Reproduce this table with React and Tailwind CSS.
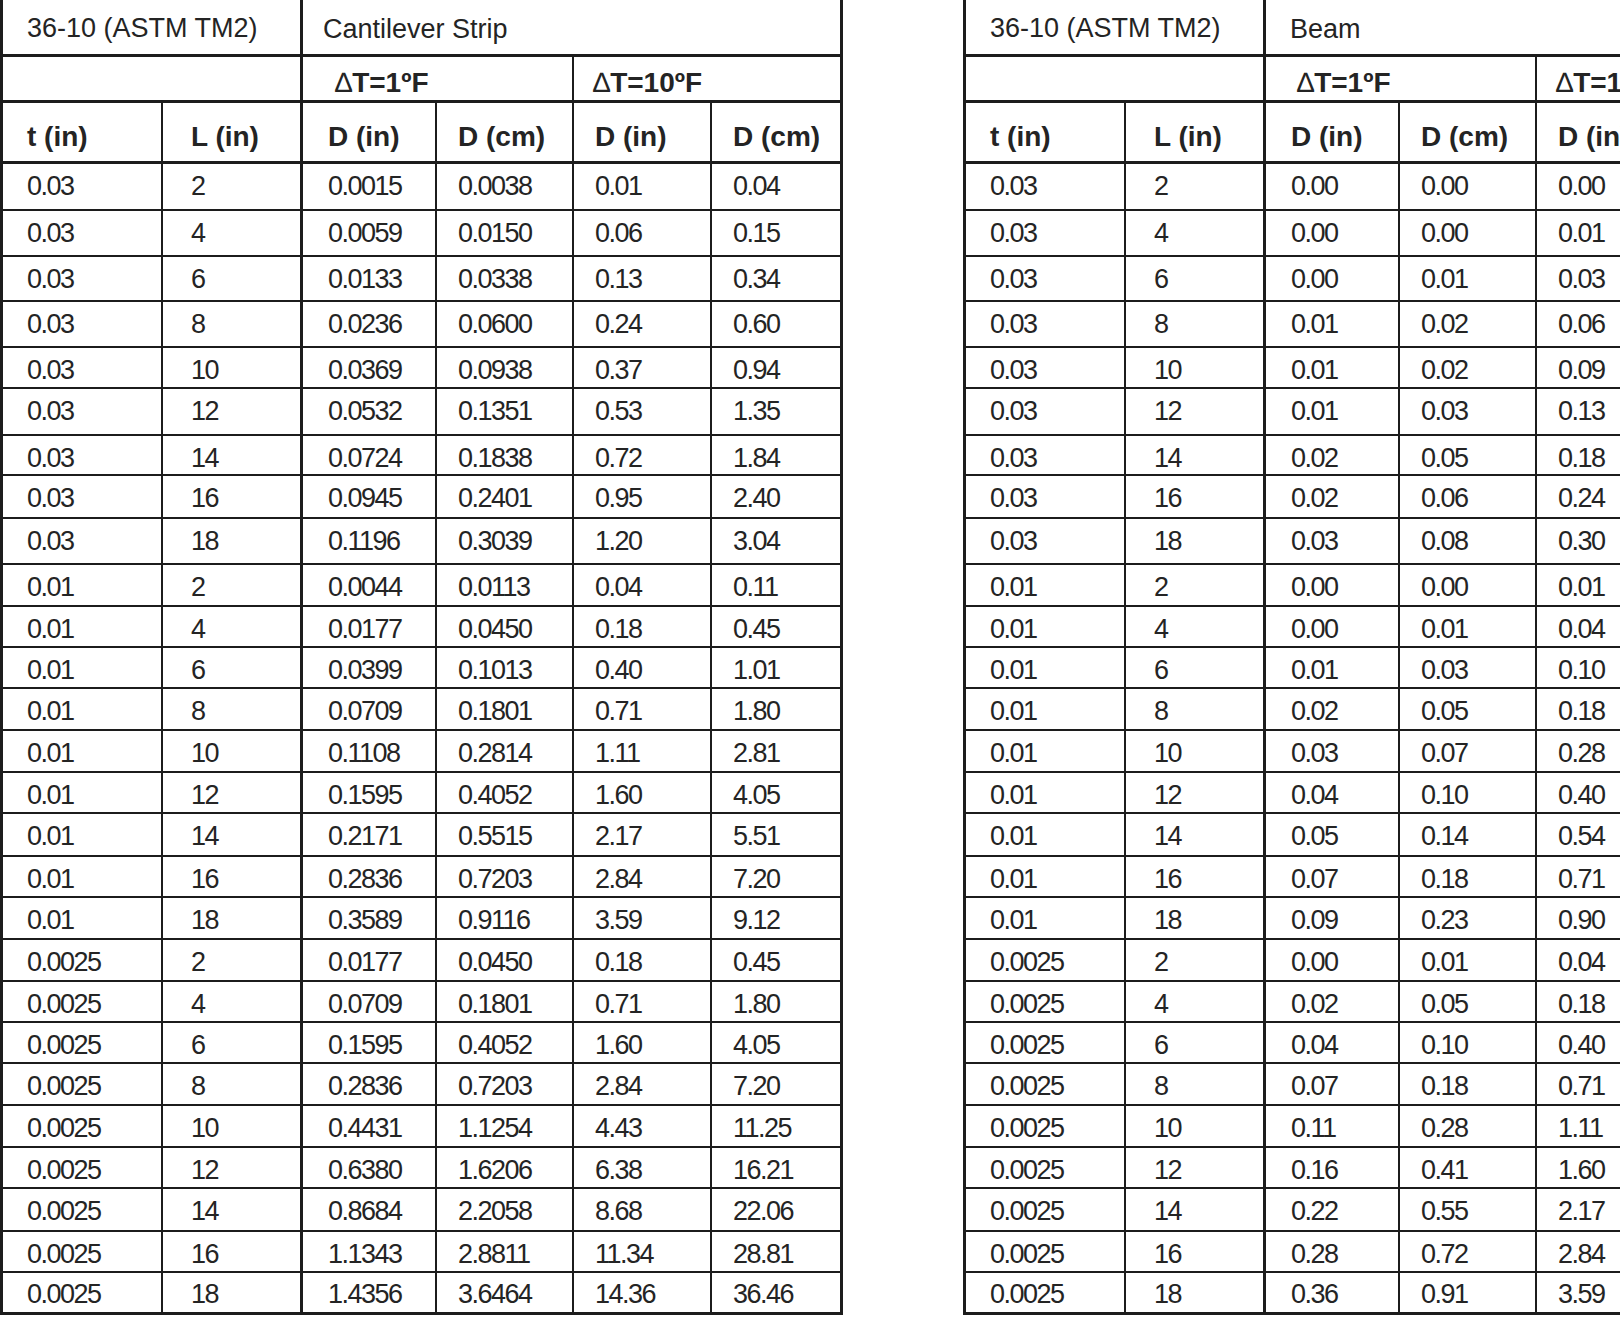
const rowHeights = [
  "h-[47px]", "h-[46px]", "h-[45px]", "h-[46px]", "h-[41px]", "h-[47px]",
  "h-[40px]", "h-[43px]", "h-[46px]", "h-[42px]", "h-[41px]", "h-[41px]",
  "h-[42px]", "h-[42px]", "h-[41px]", "h-[43px]", "h-[41px]", "h-[42px]",
  "h-[42px]", "h-[41px]", "h-[41px]", "h-[42px]", "h-[42px]", "h-[41px]",
  "h-[43px]", "h-[41px]", "h-[39px]",
];

const tl = [
  ["0.03", "2"], ["0.03", "4"], ["0.03", "6"], ["0.03", "8"], ["0.03", "10"],
  ["0.03", "12"], ["0.03", "14"], ["0.03", "16"], ["0.03", "18"],
  ["0.01", "2"], ["0.01", "4"], ["0.01", "6"], ["0.01", "8"], ["0.01", "10"],
  ["0.01", "12"], ["0.01", "14"], ["0.01", "16"], ["0.01", "18"],
  ["0.0025", "2"], ["0.0025", "4"], ["0.0025", "6"], ["0.0025", "8"],
  ["0.0025", "10"], ["0.0025", "12"], ["0.0025", "14"], ["0.0025", "16"],
  ["0.0025", "18"],
];

const cantilever = [
  ["0.0015", "0.0038", "0.01", "0.04"],
  ["0.0059", "0.0150", "0.06", "0.15"],
  ["0.0133", "0.0338", "0.13", "0.34"],
  ["0.0236", "0.0600", "0.24", "0.60"],
  ["0.0369", "0.0938", "0.37", "0.94"],
  ["0.0532", "0.1351", "0.53", "1.35"],
  ["0.0724", "0.1838", "0.72", "1.84"],
  ["0.0945", "0.2401", "0.95", "2.40"],
  ["0.1196", "0.3039", "1.20", "3.04"],
  ["0.0044", "0.0113", "0.04", "0.11"],
  ["0.0177", "0.0450", "0.18", "0.45"],
  ["0.0399", "0.1013", "0.40", "1.01"],
  ["0.0709", "0.1801", "0.71", "1.80"],
  ["0.1108", "0.2814", "1.11", "2.81"],
  ["0.1595", "0.4052", "1.60", "4.05"],
  ["0.2171", "0.5515", "2.17", "5.51"],
  ["0.2836", "0.7203", "2.84", "7.20"],
  ["0.3589", "0.9116", "3.59", "9.12"],
  ["0.0177", "0.0450", "0.18", "0.45"],
  ["0.0709", "0.1801", "0.71", "1.80"],
  ["0.1595", "0.4052", "1.60", "4.05"],
  ["0.2836", "0.7203", "2.84", "7.20"],
  ["0.4431", "1.1254", "4.43", "11.25"],
  ["0.6380", "1.6206", "6.38", "16.21"],
  ["0.8684", "2.2058", "8.68", "22.06"],
  ["1.1343", "2.8811", "11.34", "28.81"],
  ["1.4356", "3.6464", "14.36", "36.46"],
];

const beam = [
  ["0.00", "0.00", "0.00"], ["0.00", "0.00", "0.01"], ["0.00", "0.01", "0.03"],
  ["0.01", "0.02", "0.06"], ["0.01", "0.02", "0.09"], ["0.01", "0.03", "0.13"],
  ["0.02", "0.05", "0.18"], ["0.02", "0.06", "0.24"], ["0.03", "0.08", "0.30"],
  ["0.00", "0.00", "0.01"], ["0.00", "0.01", "0.04"], ["0.01", "0.03", "0.10"],
  ["0.02", "0.05", "0.18"], ["0.03", "0.07", "0.28"], ["0.04", "0.10", "0.40"],
  ["0.05", "0.14", "0.54"], ["0.07", "0.18", "0.71"], ["0.09", "0.23", "0.90"],
  ["0.00", "0.01", "0.04"], ["0.02", "0.05", "0.18"], ["0.04", "0.10", "0.40"],
  ["0.07", "0.18", "0.71"], ["0.11", "0.28", "1.11"], ["0.16", "0.41", "1.60"],
  ["0.22", "0.55", "2.17"], ["0.28", "0.72", "2.84"], ["0.36", "0.91", "3.59"],
].map((r) => [...r, (Number(r[2]) * 2.54).toFixed(2)]);

const line = "border-[#1c1c1c]";

// widths + left padding for the six columns
const cols = [
  "w-[160px] border-r-2 pl-[24px]",
  "w-[140px] border-r-[3px] pl-[28px]",
  "w-[134px] border-r-2 pl-[25px]",
  "w-[137px] border-r-2 pl-[21px]",
  "w-[138px] border-r-2 pl-[21px]",
  "w-[128px] pl-[21px]",
];

const Delta = ({ text }) => (
  <span>
    <span className="font-normal">∆</span>
    {text}
  </span>
);

const DataTable = ({ title, titlePad, delta1Pad, rows }) => (
  <div
    className={`w-[843px] shrink-0 border-l-[3px] border-r-[3px] border-b-[3px] ${line} bg-white text-[#242424]`}
  >
    <div className={`flex h-[57px] border-b-[3px] ${line} text-[27px] leading-[31px]`}>
      <div className={`w-[300px] border-r-[3px] ${line} pl-[24px] pt-[13px]`}>
        36-10 (ASTM TM2)
      </div>
      <div className={`flex-1 pt-[14px] ${titlePad}`}>{title}</div>
    </div>
    <div className={`flex h-[46px] border-b-[3px] ${line} text-[28px] font-bold leading-[32px]`}>
      <div className={`w-[300px] border-r-[3px] ${line}`}></div>
      <div className={`w-[271px] border-r-2 ${line} pt-[10px] ${delta1Pad}`}>
        <Delta text="T=1ºF" />
      </div>
      <div className="flex-1 pt-[10px] pl-[19px]">
        <Delta text="T=10ºF" />
      </div>
    </div>
    <div className={`flex h-[61px] border-b-[3px] ${line} text-[28px] font-bold leading-[32px]`}>
      {["t (in)", "L (in)", "D (in)", "D (cm)", "D (in)", "D (cm)"].map((h, i) => (
        <div key={i} className={`${cols[i]} ${line} pt-[18px] whitespace-nowrap`}>
          {h}
        </div>
      ))}
    </div>
    {rows.map((r, ri) => (
      <div
        key={ri}
        className={`flex ${rowHeights[ri]} ${ri < rows.length - 1 ? "border-b-2" : ""} ${line} text-[27px] leading-[30px] tracking-[-1.5px]`}
      >
        {r.map((v, i) => (
          <div
            key={i}
            className={`${cols[i]} ${line} ${ri === rows.length - 1 ? "pt-[6px]" : "pt-[7px]"} whitespace-nowrap`}
          >
            {v}
          </div>
        ))}
      </div>
    ))}
  </div>
);

export default function App() {
  return (
    <div
      className="w-[1620px] h-[1322px] overflow-hidden bg-white"
      style={{ fontFamily: '"Liberation Sans", Arial, sans-serif' }}
    >
      <div className="flex gap-[120px]">
        <DataTable
          title="Cantilever Strip"
          titlePad="pl-[20px]"
          delta1Pad="pl-[32px]"
          rows={tl.map((t, i) => [...t, ...cantilever[i]])}
        />
        <DataTable
          title="Beam"
          titlePad="pl-[24px]"
          delta1Pad="pl-[31px]"
          rows={tl.map((t, i) => [...t, ...beam[i]])}
        />
      </div>
    </div>
  );
}
